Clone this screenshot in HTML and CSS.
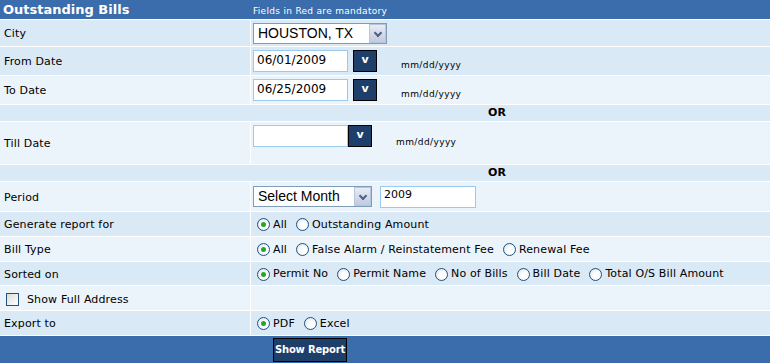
FILE: index.html
```html
<!DOCTYPE html>
<html lang="en">
<head>
    <meta charset="UTF-8">
    <title>Outstanding Bills</title>
    <link rel="stylesheet" href="styles.css">
</head>
<body>
<form id="bills">
    <div class="head row">
        <div class="lbl">Outstanding Bills</div>
        <div class="val note">Fields in Red are mandatory</div>
    </div>

    <div class="row dark h-city">
        <div class="lbl">City</div>
        <div class="val">
            <span class="sel w-city">HOUSTON, TX<i class="arr"></i></span>
        </div>
    </div>
    <div class="row dark h-date">
        <div class="lbl">From Date</div>
        <div class="val">
            <span class="txt w-date">06/01/2009</span>
            <span class="calBtn gap">v</span>
            <span class="hint">mm/dd/yyyy</span>
        </div>
    </div>
    <div class="row light h-date">
        <div class="lbl">To Date</div>
        <div class="val">
            <span class="txt w-date">06/25/2009</span>
            <span class="calBtn gap">v</span>
            <span class="hint">mm/dd/yyyy</span>
        </div>
    </div>
    <div class="row dark or">OR</div>
    <div class="row light h-till">
        <div class="lbl">Till Date</div>
        <div class="val top">
            <span class="txt w-date"></span>
            <span class="calBtn">v</span>
            <span class="hint">mm/dd/yyyy</span>
        </div>
    </div>
    <div class="row dark or">OR</div>
    <div class="row light h-period">
        <div class="lbl">Period</div>
        <div class="val">
            <span class="sel w-month">Select Month<i class="arr"></i></span>
            <span class="txt w-year">2009</span>
        </div>
    </div>
    <div class="row dark h-24">
        <div class="lbl">Generate report for</div>
        <div class="val">
            <label class="opt"><i class="rd on"></i>All</label>
            <label class="opt"><i class="rd"></i>Outstanding Amount</label>
        </div>
    </div>
    <div class="row light h-24">
        <div class="lbl">Bill Type</div>
        <div class="val">
            <label class="opt"><i class="rd on"></i>All</label>
            <label class="opt"><i class="rd"></i>False Alarm / Reinstatement Fee</label>
            <label class="opt"><i class="rd"></i>Renewal Fee</label>
        </div>
    </div>
    <div class="row dark h-23">
        <div class="lbl">Sorted on</div>
        <div class="val">
            <label class="opt"><i class="rd on"></i>Permit No</label>
            <label class="opt"><i class="rd"></i>Permit Name</label>
            <label class="opt"><i class="rd"></i>No of Bills</label>
            <label class="opt"><i class="rd"></i>Bill Date</label>
            <label class="opt"><i class="rd"></i>Total O/S Bill Amount</label>
        </div>
    </div>
    <div class="row light h-24">
        <div class="lbl"><label class="opt chkOpt"><i class="chk"></i>Show Full Address</label></div>
        <div class="val"></div>
    </div>
    <div class="row dark h-export">
        <div class="lbl">Export to</div>
        <div class="val">
            <label class="opt"><i class="rd on"></i>PDF</label>
            <label class="opt"><i class="rd"></i>Excel</label>
        </div>
    </div>
    <div class="foot">
        <span class="showBtn">Show Report</span>
    </div>
</form>
</body>
</html>
```

FILE: styles.css
```css
*{ margin: 0; padding: 0; box-sizing: border-box; }
body{ background: #fff; color: #000; font: 11px/1.2 "DejaVu Sans", Verdana, sans-serif; }

#bills{ width: 770px; }
#bills .row{ display: flex; border-bottom: 1px solid #fff; }
#bills .lbl{ width: 251px; border-right: 1px solid #fff; padding: 2px 0 0 4px; display: flex; align-items: center; flex-shrink: 0; letter-spacing: 0.15px; }
#bills .val{ flex: 1; display: flex; align-items: center; padding-left: 2px; }
#bills .val.top{ align-items: flex-start; padding-top: 3px; }

#bills .dark{ background: #dae9f6; }
#bills .light{ background: #ebf3fb; }

#bills .head{ background: #3b6cac; color: #fff; height: 20px; }
#bills .head .lbl{ font-weight: bold; font-size: 13px; padding: 0 0 0 3px; border-right: 0; letter-spacing: 0; }
#bills .head .note{ font-size: 9px; padding-top: 3px; padding-left: 2px; letter-spacing: 0.3px; }

#bills .h-city{ height: 27px; }
#bills .h-date{ height: 29px; }
#bills .h-till{ height: 43px; }
#bills .h-period{ height: 30px; }
#bills .h-24{ height: 25px; }
#bills .h-23{ height: 24px; }
#bills .h-export{ height: 25px; }

#bills .or{ height: 17px; justify-content: center; align-items: center; font-weight: bold; padding-left: 224px; }

#bills .sel{ position: relative; display: inline-block; height: 21px; border: 1px solid #7f9db9; background: #fff; font: 14px/19px "Liberation Sans", Arial, sans-serif; padding-left: 4px; }
#bills .sel .arr{ position: absolute; right: 0; top: 0; width: 17px; height: 19px; border: 1px solid #b9c4dd; background: linear-gradient(#e8ecf6, #c3cadf); }
#bills .sel .arr:after{ content: ""; position: absolute; left: 5px; top: 5px; width: 4px; height: 4px; border-right: 2px solid #4d6185; border-bottom: 2px solid #4d6185; transform: rotate(45deg); }
#bills .w-city{ width: 134px; }
#bills .w-month{ width: 119px; }

#bills .txt{ display: inline-block; height: 22px; border: 1px solid #9ccaee; background: #fff; padding: 1px 0 0 3px; font-size: 12px; line-height: 16px; }
#bills .w-date{ width: 95px; }
#bills .w-year{ width: 96px; margin-left: 8px; font-size: 11px; padding-top: 0; }

#bills .calBtn{ display: inline-block; width: 24px; height: 22px; background: #1f3f6b; border: 1px solid #000; color: #fff; font-weight: bold; font-size: 11px; line-height: 18px; text-align: center; }
#bills .calBtn.gap{ margin-left: 5px; }
#bills .hint{ font-size: 9px; margin-left: 24px; padding-top: 9px; letter-spacing: 0.4px; }
#bills .top .hint{ padding-top: 12px; }

#bills .opt{ display: inline-flex; align-items: center; margin-left: 4px; margin-right: 5px; letter-spacing: 0.14px; padding-top: 1px; }
#bills .rd{ display: inline-block; position: relative; width: 13px; height: 13px; border: 1px solid #1d5283; border-radius: 50%; background: radial-gradient(circle at 60% 60%, #fff 30%, #d6dbe2 100%); margin-right: 3px; }
#bills .rd.on:after{ content: ""; position: absolute; left: 3px; top: 3px; width: 5px; height: 5px; border-radius: 50%; background: #22a822; }
#bills .chkOpt{ margin-left: 2px; }
#bills .chk{ display: inline-block; width: 13px; height: 13px; border: 1px solid #1d5283; background: linear-gradient(135deg, #dcdcd6, #fff); margin-right: 8px; }

#bills .foot{ background: #3b6cac; height: 27px; padding: 2px 0 0 273px; }
#bills .showBtn{ display: inline-block; width: 74px; height: 24px; background: #1f3f6b; border: 1px solid #000; color: #fff; font-weight: bold; font-size: 10px; line-height: 22px; text-align: center; letter-spacing: -0.2px; }
```
